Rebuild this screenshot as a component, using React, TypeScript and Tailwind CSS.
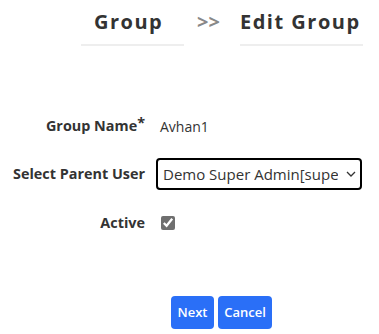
export default function App() {
  return (
    <div className="w-[379px] h-[334px] bg-white font-['Open_Sans',sans-serif] text-[#333]">
      <div className="flex items-start pt-[7px] h-[46px]">
        <div className="ml-[81px] w-[103px] h-[39px] pl-[13px] border-b-2 border-[#eee]">
          <span className="text-[20px] leading-[30px] font-bold tracking-[1.5px] text-[#333]">Group</span>
        </div>
        <div className="w-[56px] pl-[13px] text-[20px] leading-[30px] font-bold text-[#888]">&gt;&gt;</div>
        <div className="w-[123px] h-[39px] border-b-2 border-[#eee]">
          <span className="text-[20px] leading-[30px] font-bold tracking-[1.5px] text-[#333]">Edit Group</span>
        </div>
      </div>

      <div className="mt-[70px] flex flex-col text-[14.4px]">
        <div className="flex items-center h-[20px]">
          <div className="w-[145px] text-right font-bold text-[#333] whitespace-nowrap">
            Group Name<span className="relative -top-[3px]">*</span>
          </div>
          <div className="pl-[15px] text-[14px] text-[#333]">Avhan1</div>
        </div>
        <div className="flex items-center mt-[22px] h-[32px]">
          <div className="w-[145px] text-right font-bold text-[#333] whitespace-nowrap">Select Parent User</div>
          <div className="pl-[11px]">
            <div className="relative w-[206px] h-[32px]">
              <select className="appearance-none w-full h-full rounded-[4px] border-2 border-black pl-[5px] pr-[22px] text-[15px] text-[#333] bg-white">
                <option>Demo Super Admin[superadmin]</option>
              </select>
              <svg className="absolute right-[6px] top-[13px] pointer-events-none" width="10" height="6" viewBox="0 0 10 6" fill="none">
                <path d="M1 1l4 4 4-4" stroke="#333" strokeWidth="1.3" />
              </svg>
            </div>
          </div>
        </div>
        <div className="flex items-center mt-[23px] h-[20px]">
          <div className="w-[145px] text-right font-bold text-[#333]">Active</div>
          <div className="pl-[16px] flex items-center">
            <input type="checkbox" checked readOnly className="w-[14px] h-[14px] accent-[#6f6f6f]" />
          </div>
        </div>
      </div>

      <div className="mt-[63px] flex gap-[4px] pl-[171px]">
        <button className="h-[33px] w-[43px] rounded-[4px] bg-[#2a6ff7] text-white text-[13px] font-semibold">Next</button>
        <button className="h-[33px] w-[54px] rounded-[4px] bg-[#2a6ff7] text-white text-[13px] font-semibold">Cancel</button>
      </div>
    </div>
  );
}
